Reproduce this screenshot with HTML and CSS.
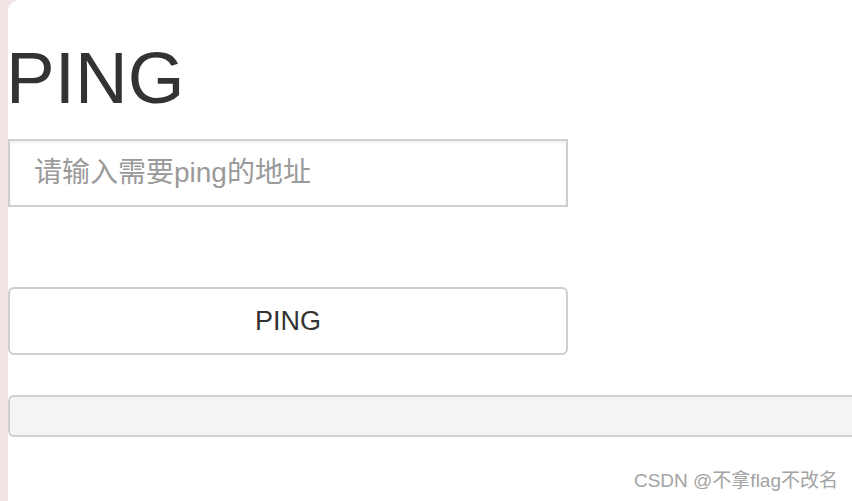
FILE: index.html
```html
<!DOCTYPE html>
<html lang="zh">
<head>
<meta charset="utf-8">
<title>PING</title>
<link rel="stylesheet" href="styles.css">
</head>
<body>
<div class="page">
  <main class="card">
    <h1 class="title">PING</h1>
    <input class="addr" type="text" placeholder="请输入需要ping的地址">
    <button class="btn" type="button">PING</button>
    <div class="output"></div>
  </main>
</div>
<div class="watermark">CSDN @不拿flag不改名</div>
</body>
</html>
```
FILE: styles.css
```css
html, body {
  margin: 0;
  padding: 0;
  height: 100%;
  overflow: hidden;
  background: #f2e4e4;
  font-family: "Liberation Sans", "Noto Sans CJK SC", Arial, sans-serif;
}
.page {
  display: flex;
  height: 100%;
  padding-left: 8px;
  box-sizing: border-box;
}
.card {
  flex: 1;
  background: #ffffff;
  border-top-left-radius: 12px;
  display: flex;
  flex-direction: column;
  align-items: flex-start;
  min-width: 0;
}
.title {
  margin: 37px 0 20px -2px;
  font-size: 73px;
  line-height: 82px;
  font-weight: normal;
  color: #333333;
}
.addr {
  box-sizing: border-box;
  width: 560px;
  height: 68px;
  margin: 0;
  padding: 0 24px;
  border: 2px solid #cfcfcf;
  border-radius: 0;
  box-shadow: inset 0 2px 3px rgba(0, 0, 0, 0.06);
  font-family: "Liberation Sans", "Noto Sans CJK SC", sans-serif;
  font-size: 28px;
  color: #333333;
  outline: none;
}
.addr::placeholder {
  color: #9a9a9a;
}
.btn {
  box-sizing: border-box;
  width: 560px;
  height: 68px;
  margin: 80px 0 0 0;
  padding: 0;
  background: #ffffff;
  border: 2px solid #cfcfcf;
  border-radius: 6px;
  font-family: "Liberation Sans", "Noto Sans CJK SC", sans-serif;
  font-size: 27px;
  color: #333333;
}
.output {
  box-sizing: border-box;
  align-self: stretch;
  height: 42px;
  margin-top: 40px;
  background: #f4f4f4;
  border: 2px solid #cfcfcf;
  border-right: none;
  border-radius: 6px 0 0 6px;
}
.watermark {
  position: absolute;
  right: 14px;
  bottom: 9px;
  font-family: "Liberation Sans", "Noto Sans CJK SC", sans-serif;
  font-size: 19px;
  color: #a3a3a3;
  text-shadow: 0 0 1px #ffffff;
}
```
